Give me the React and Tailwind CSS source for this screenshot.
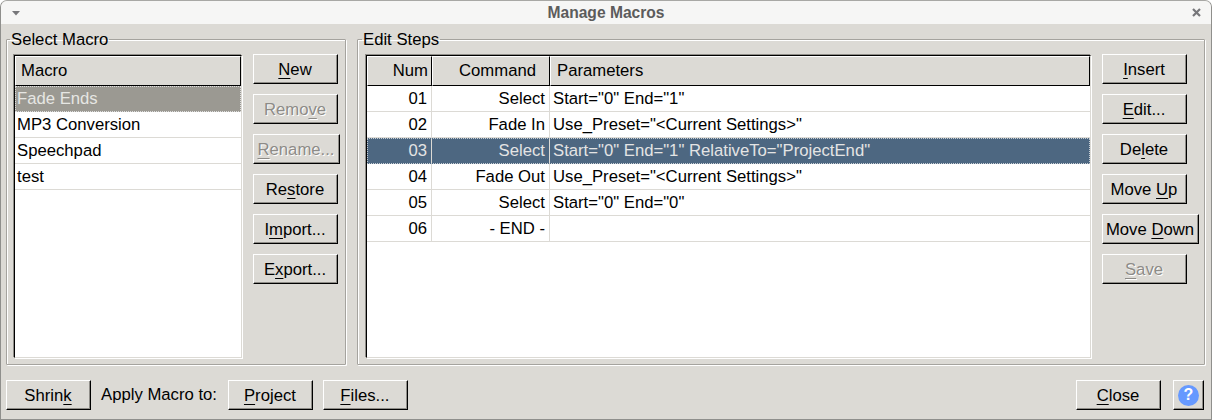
import React from "react";

const macros = ["Fade Ends", "MP3 Conversion", "Speechpad", "test"];

const steps = [
  ["01", "Select", 'Start="0" End="1"'],
  ["02", "Fade In", 'Use_Preset="<Current Settings>"'],
  ["03", "Select", 'Start="0" End="1" RelativeTo="ProjectEnd"'],
  ["04", "Fade Out", 'Use_Preset="<Current Settings>"'],
  ["05", "Select", 'Start="0" End="0"'],
  ["06", "- END -", ""],
];

// label is split round the mnemonic letter: [before, letter, after]
function Btn({ label, disabled, className = "w-[85px]" }) {
  return (
    <button
      className={
        "h-[30px] shrink-0 pt-[2px] pr-[1px] whitespace-nowrap bg-[#dcdad5] border border-t-white border-l-white border-r-black border-b-black shadow-[inset_-1px_-1px_0_#8f8d88] " +
        (disabled ? "text-[#8d8b87] [text-shadow:1px_1px_0_#ffffff] " : "text-black ") +
        className
      }
    >
      {label[0]}
      <span className="underline decoration-1 underline-offset-[3px]">{label[1]}</span>
      {label[2]}
    </button>
  );
}

function HeadCell({ children, className = "" }) {
  return (
    <div className={"h-[30px] flex items-center bg-[#dcdad5] border border-t-white border-l-white border-r-black border-b-black " + className}>
      {children}
    </div>
  );
}

function Group({ title, className = "", children }) {
  return (
    <fieldset className={"min-w-0 border border-[#a5a39e] rounded-[1px] shadow-[inset_1px_1px_0_#ffffff,1px_1px_0_#ffffff] pb-[6px] pt-[6px] flex gap-[11px] " + className}>
      <legend className="relative top-[1px] -ml-[3px] px-[1px] leading-[18px] text-black">{title}</legend>
      {children}
    </fieldset>
  );
}

export default function App() {
  return (
    <div className="w-[1212px] h-[420px] flex flex-col overflow-hidden rounded-t-[7px] bg-[#dcdad5] border border-[#8f8f8c] border-t-[#a8a8a5] text-[16.7px] leading-[20px] text-black font-['Liberation_Sans',Arial,sans-serif]">
      {/* Title bar */}
      <div className="h-[23px] shrink-0 flex items-center justify-between bg-[#f6f6f5] pl-[10px] pr-[9px]">
        <svg width="10" height="6" viewBox="0 0 10 6">
          <path d="M1 1h8L5 5.5z" fill="#77777a" />
        </svg>
        <span className="text-[15.6px] font-bold text-[#5c5c5c]">Manage Macros</span>
        <svg width="11" height="11" viewBox="0 0 11 11">
          <path d="M2 2l7 7M9 2l-7 7" stroke="#77777a" strokeWidth="2.2" />
        </svg>
      </div>

      {/* Panels */}
      <div className="h-[334px] shrink-0 flex gap-[11px] pl-[5px] pt-[6px]">
        <Group title="Select Macro" className="pl-[6px] w-[340px] h-[335px]">
          <div className="w-[228px] h-[303px] ml-[1px] mt-[1px] shrink-0 bg-white border border-t-black border-l-black border-r-[#dcdad5] border-b-[#dcdad5] shadow-[-1px_-1px_0_#8f8d88,1px_1px_0_#ffffff]">
            <HeadCell className="pl-[5px]">Macro</HeadCell>
            {macros.map((m, i) => (
              <div
                key={m}
                className={
                  "h-[26px] flex items-center " +
                  (i === 0
                    ? "bg-[#9b9992] text-[#e6e6e3] border border-dotted border-[#dddddd] pl-[1px]"
                    : "border-b border-[#dcdad5] pl-[2px]")
                }
              >
                {m}
              </div>
            ))}
          </div>
          <div className="flex flex-col items-start gap-[10px]">
            <Btn label={["", "N", "ew"]} />
            <Btn label={["Remo", "v", "e"]} disabled />
            <Btn label={["", "R", "ename..."]} disabled className="w-[87px]" />
            <Btn label={["Re", "s", "tore"]} />
            <Btn label={["I", "m", "port..."]} />
            <Btn label={["E", "x", "port..."]} />
          </div>
        </Group>

        <Group title="Edit Steps" className="pl-[7px] w-[848px] h-[335px]">
          <div className="w-[725px] h-[303px] ml-[1px] mt-[1px] shrink-0 bg-white border border-t-black border-l-black border-r-[#dcdad5] border-b-[#dcdad5] shadow-[-1px_-1px_0_#8f8d88,1px_1px_0_#ffffff]">
            <div className="grid grid-cols-[65px_118px_1fr]">
              <HeadCell className="justify-end pr-[3px]">Num</HeadCell>
              <HeadCell className="justify-center pl-[13px]">Command</HeadCell>
              <HeadCell className="pl-[6px]">Parameters</HeadCell>
            </div>
            {steps.map((s, i) => (
              <div
                key={s[0]}
                className={
                  "h-[26px] grid grid-cols-[65px_118px_1fr] " +
                  (i === 2
                    ? "bg-[#4d6781] text-[#e4e4e4] outline-1 outline-dotted -outline-offset-1 outline-[#c8ced4]"
                    : "border-b border-[#dcdad5]")
                }
              >
                <div className="flex items-center justify-end pr-[4px] border-r border-[#dcdad5]">{s[0]}</div>
                <div className="flex items-center justify-end pr-[4px] border-r border-[#dcdad5]">{s[1]}</div>
                <div className="flex items-center pl-[3px]">{s[2]}</div>
              </div>
            ))}
          </div>
          <div className="flex flex-col items-start gap-[10px]">
            <Btn label={["", "I", "nsert"]} />
            <Btn label={["", "E", "dit..."]} />
            <Btn label={["De", "l", "ete"]} />
            <Btn label={["Move ", "U", "p"]} />
            <Btn label={["Move ", "D", "own"]} className="w-[97px]" />
            <Btn label={["", "S", "ave"]} disabled />
          </div>
        </Group>
      </div>

      {/* Bottom bar */}
      <div className="flex items-center pl-[5px] pr-[7px] pt-[22px]">
        <Btn label={["Shrin", "k", ""]} />
        <span className="ml-[10px] mr-[11px]">Apply Macro to:</span>
        <Btn label={["", "P", "roject"]} />
        <Btn label={["", "F", "iles..."]} className="w-[85px] ml-[10px]" />
        <Btn label={["", "C", "lose"]} className="w-[85px] ml-auto" />
        <button className="ml-[12px] w-[31px] h-[30px] flex items-center justify-center bg-[#dcdad5] border border-t-white border-l-white border-r-black border-b-black shadow-[inset_-1px_-1px_0_#8f8d88]">
          <span className="w-[21px] h-[21px] rounded-full bg-[#6699ff] flex items-center justify-center text-white font-bold text-[16px]">?</span>
        </button>
      </div>
    </div>
  );
}
